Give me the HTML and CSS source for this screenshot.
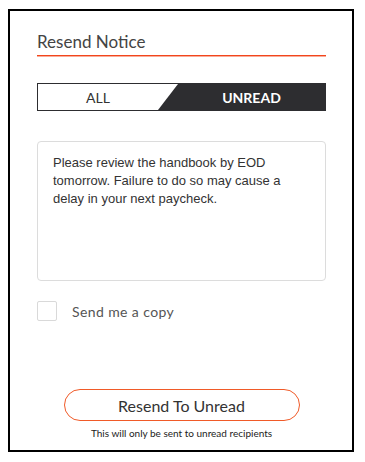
FILE: index.html
```html
<!DOCTYPE html>
<html>
<head>
<meta charset="utf-8">
<link rel="stylesheet" href="styles.css">
</head>
<body>
<div class="panel">
  <div class="title">Resend Notice</div>
  <div class="toggle">
    <div class="opt opt-all">ALL</div>
    <div class="opt opt-unread">UNREAD</div>
  </div>
  <div class="message">Please review the handbook by EOD tomorrow. Failure to do so may cause a delay in your next paycheck.</div>
  <label class="copy">
    <span class="box"></span>
    <span class="copy-text">Send me a copy</span>
  </label>
  <div class="actions">
    <button class="resend">Resend To Unread</button>
    <div class="hint">This will only be sent to unread recipients</div>
  </div>
</div>
</body>
</html>
```

FILE: styles.css
```css
* { box-sizing: border-box; }
body {
  margin: 9px 8px 8px 8px;
  font-family: Lato, "Open Sans", sans-serif;
  background: #fff;
}
.panel {
  width: 346px;
  height: 443px;
  border: 2px solid #000;
  padding: 0 26px 0 27px;
  display: flex;
  flex-direction: column;
}
.title {
  margin-top: 21px;
  font-size: 17px;
  line-height: 20px;
  color: #444;
  padding-bottom: 3px;
  border-bottom: 1px solid #f2461c;
  box-shadow: 0 1px 0 rgba(242, 70, 28, 0.45);
}
.toggle {
  margin-top: 27px;
  height: 28px;
  border: 1px solid #2d2d30;
  display: grid;
  grid-template-columns: 120px 20px 1fr;
  font-size: 14px;
  text-transform: uppercase;
}
.opt {
  display: flex;
  align-items: center;
  justify-content: center;
  grid-row: 1;
}
.opt-all {
  grid-column: 1;
  color: #333;
}
.opt-unread {
  grid-column: 2 / 4;
  background: #2d2d30;
  color: #fff;
  font-weight: 700;
  padding-left: 20px;
  clip-path: polygon(20px 0, 100% 0, 100% 100%, 0 100%);
}
.message {
  margin-top: 30px;
  height: 140px;
  border: 1px solid #dcdcdc;
  border-radius: 4px;
  padding: 12px 15px;
  font-family: "Liberation Sans", Arial, sans-serif;
  font-size: 13px;
  line-height: 18px;
  color: #333;
}
.copy {
  margin-top: 20px;
  display: flex;
  align-items: center;
  height: 20px;
}
.box {
  width: 20px;
  height: 20px;
  border: 1px solid #d9d9d9;
  border-radius: 2px;
}
.copy-text {
  margin-left: 15px;
  font-size: 14px;
  letter-spacing: 0.4px;
  color: #555;
}
.actions {
  margin-top: 68px;
  display: flex;
  flex-direction: column;
  align-items: center;
}
.resend {
  width: 236px;
  height: 32px;
  border: 1px solid #f05a28;
  border-radius: 16px;
  background: #fff;
  font-family: Lato, "Open Sans", sans-serif;
  font-size: 16px;
  color: #333;
  padding: 0;
}
.hint {
  margin-top: 6px;
  font-size: 10px;
  line-height: 12px;
  color: #222;
}
```
